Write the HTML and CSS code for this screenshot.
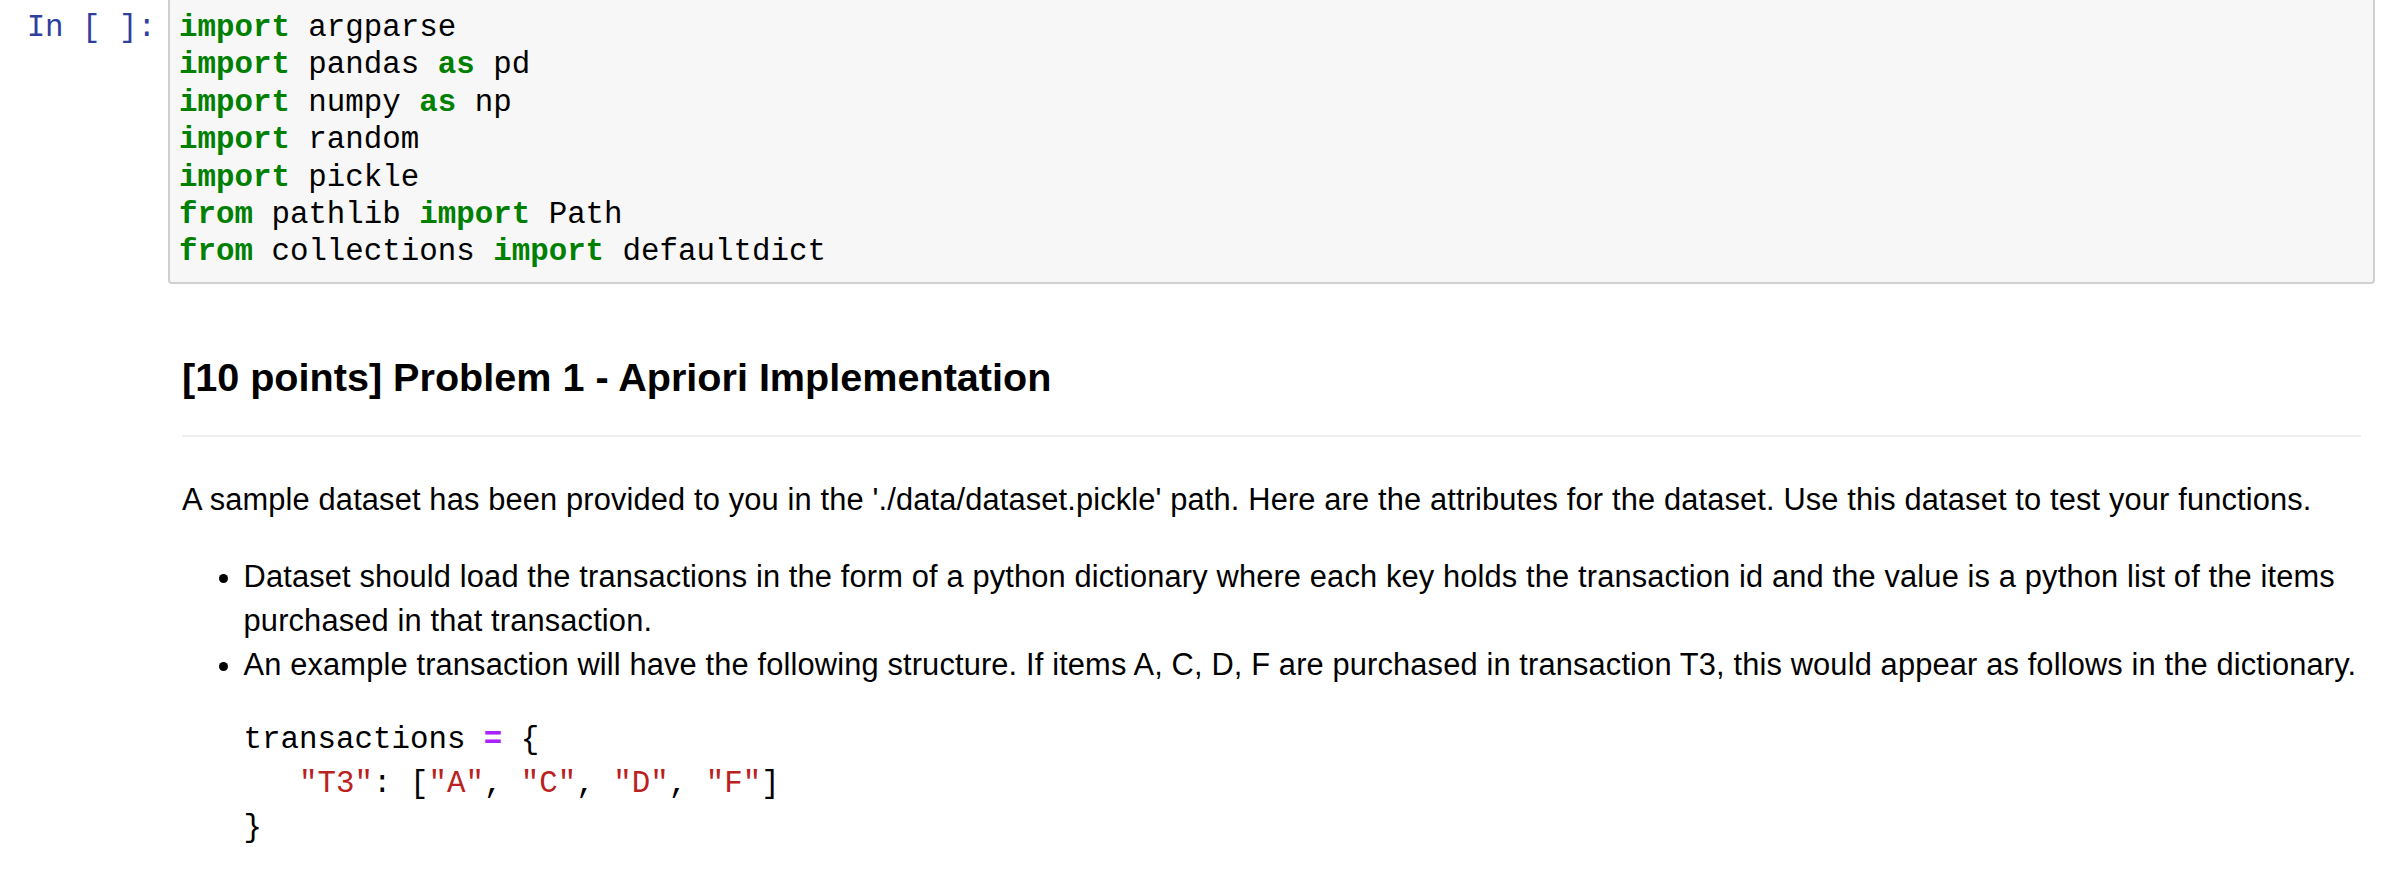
FILE: index.html
```html
<!DOCTYPE html>
<html>
<head>
<meta charset="utf-8">
<link rel="stylesheet" href="styles.css">
</head>
<body>
<div class="notebook">
  <div class="cell code-cell">
    <div class="prompt">In&nbsp;[&nbsp;]:</div>
    <div class="input-area"><pre class="code"><span class="kw">import</span> argparse
<span class="kw">import</span> pandas <span class="kw">as</span> pd
<span class="kw">import</span> numpy <span class="kw">as</span> np
<span class="kw">import</span> random
<span class="kw">import</span> pickle
<span class="kw">from</span> pathlib <span class="kw">import</span> Path
<span class="kw">from</span> collections <span class="kw">import</span> defaultdict</pre></div>
  </div>
  <div class="cell text-cell">
    <div class="prompt"></div>
    <div class="rendered">
      <h3 class="heading">[10 points] Problem 1 - Apriori Implementation</h3>
      <hr class="rule">
      <p class="para">A sample dataset has been provided to you in the './data/dataset.pickle' path. Here are the attributes for the dataset. Use this dataset to test your functions.</p>
      <ul class="list">
        <li>Dataset should load the transactions in the form of a python dictionary where each key holds the transaction id and the value is a python list of the items purchased in that transaction.</li>
        <li>An example transaction will have the following structure. If items A, C, D, F are purchased in transaction T3, this would appear as follows in the dictionary.
<pre class="snippet">transactions <span class="op">=</span> {
   <span class="str">"T3"</span>: [<span class="str">"A"</span>, <span class="str">"C"</span>, <span class="str">"D"</span>, <span class="str">"F"</span>]
}</pre></li>
      </ul>
    </div>
  </div>
</div>
</body>
</html>
```
FILE: styles.css
```css
html, body {
  margin: 0;
  padding: 0;
  background: #ffffff;
}

body {
  font-family: "Liberation Sans", Arial, Helvetica, sans-serif;
  font-size: 30.8px;
  line-height: 44px;
  color: #000000;
  overflow: hidden;
}

.notebook {
  display: flex;
  flex-direction: column;
}

.cell {
  display: flex;
  flex-direction: row;
  align-items: flex-start;
}

.prompt {
  flex: 0 0 168px;
  box-sizing: border-box;
  text-align: right;
  padding-right: 12px;
  font-family: "Liberation Mono", "Courier New", monospace;
  font-size: 30.8px;
  line-height: 37.4px;
  color: #303F9F;
}

.code-cell {
  margin-top: -3px;
}

.code-cell .prompt {
  padding-top: 12px;
}

.input-area {
  flex: 1 1 auto;
  margin-right: 21px;
  background: #f7f7f7;
  border: 2px solid #cfcfcf;
  border-radius: 4px;
  padding: 10px 0 11px 0;
}

.code {
  margin: 0;
  padding: 0 9px;
  font-family: "Liberation Mono", "Courier New", monospace;
  font-size: 30.8px;
  line-height: 37.4px;
  color: #000000;
}

.kw {
  color: #008000;
  font-weight: bold;
}

.text-cell {
  margin-top: 72px;
}

.rendered {
  flex: 1 1 auto;
  margin: 0 35px 0 14px;
}

.heading {
  margin: 0;
  font-size: 39.6px;
  line-height: 43.6px;
  font-weight: bold;
}

.rule {
  margin: 36px 0 0 0;
  border: 0;
  border-top: 2px solid #eeeeee;
  height: 0;
}

.para {
  margin: 41px 0 0 0;
  letter-spacing: 0.15px;
}

.list {
  margin: 33px 0 0 61.6px;
  padding: 0;
  list-style: disc;
  letter-spacing: 0.15px;
}

.snippet {
  margin: 31px 0 0 0;
  padding: 0;
  font-family: "Liberation Mono", "Courier New", monospace;
  font-size: 30.8px;
  line-height: 44px;
  letter-spacing: 0;
}

.op {
  color: #AA22FF;
  font-weight: bold;
}

.str {
  color: #BA2121;
}
```
